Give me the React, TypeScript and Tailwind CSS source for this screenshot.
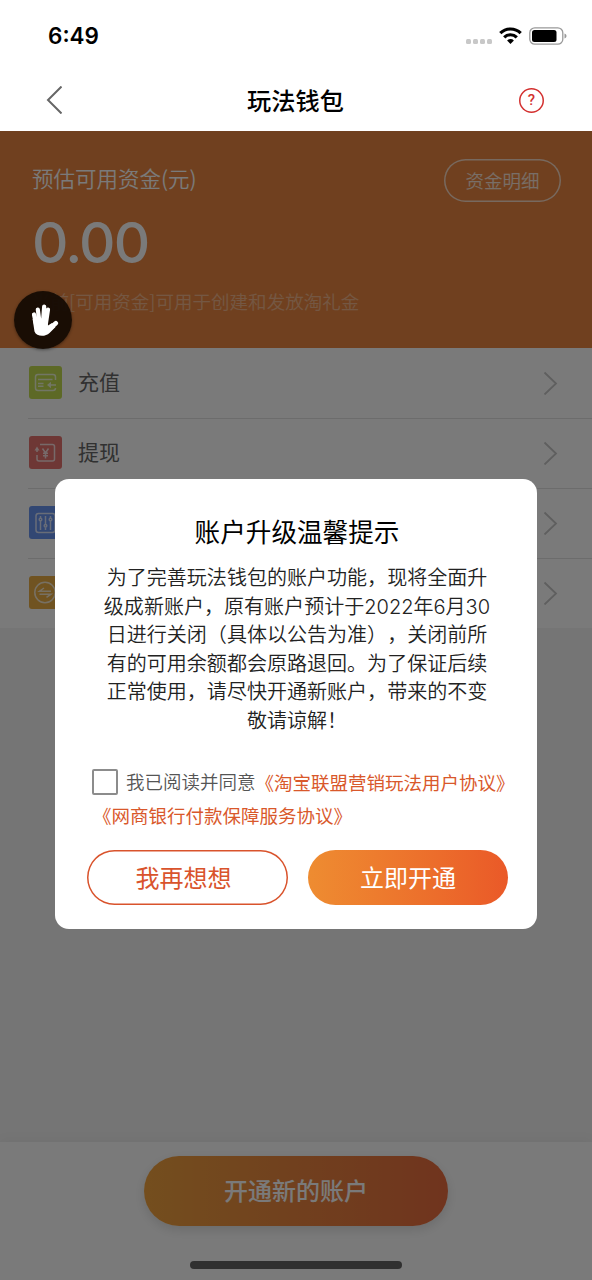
import { clsx } from 'clsx';
import type { ReactNode } from 'react';

type TMenuItem = {
  id: string;
  label?: string;
  color: string;
  icon: ReactNode;
};

const NOTICE_LINES = [
  '为了完善玩法钱包的账户功能，现将全面升',
  '级成新账户，原有账户预计于2022年6月30',
  '日进行关闭（具体以公告为准），关闭前所',
  '有的可用余额都会原路退回。为了保证后续',
  '正常使用，请尽快开通新账户，带来的不变',
  '敬请谅解！'
];

const MENU_ITEMS: TMenuItem[] = [
  {
    id: 'recharge',
    label: '充值',
    color: 'bg-[#c2dc50]',
    icon: (
      <>
        <path d="M26.500 14V11A2.500 2.500 0 0 0 24 8.500H9A2.500 2.500 0 0 0 6.500 11v11A2.500 2.500 0 0 0 9 24.500h15a2.500 2.500 0 0 0 2.500-2.500" />
        <path d="M9 13.500h14.500M9 17.500h5.500M9 20.200h5.500M27 19h-8" />
        <path d="M22 15.800L18 19l4 3.200z" fill="#fff" stroke="none" />
      </>
    )
  },
  {
    id: 'withdraw',
    label: '提现',
    color: 'bg-[#e57470]',
    icon: (
      <>
        <path d="M11 8.500h12.500a2 2 0 0 1 2 2v12.500a2 2 0 0 1-2 2H10a2 2 0 0 1-2-2v-4M8 16v-4" />
        <path d="M5.500 14.500L8 10.500l2.500 4z" fill="#fff" stroke="none" />
        <path d="M13.500 12.500l3 4.500 3-4.500M16.500 17v5.500M14 17.200h5M14 19.700h5" />
      </>
    )
  },
  {
    id: 'settings',
    color: 'bg-[#6a94f0]',
    icon: (
      <>
        <rect x="7" y="7.500" width="19" height="19" rx="2.500" />
        <path d="M11.500 10v2M11.500 15v9M16.500 10v8M16.500 21.500v2.500M21.500 10v2M21.500 15v9" />
        <circle cx="11.500" cy="13.500" r="1.300" />
        <circle cx="16.500" cy="19.700" r="1.300" />
        <circle cx="21.500" cy="13.500" r="1.300" />
      </>
    )
  },
  {
    id: 'transfer',
    color: 'bg-[#eaae45]',
    icon: (
      <>
        <circle cx="16" cy="16.500" r="10.200" />
        <path d="M22 15.200H10.500l4.500-3.200M10.500 18.200H22l-4.500 3.200" />
      </>
    )
  }
];

const StatusBar = () => (
  <div className="flex h-[70px] items-center justify-between pl-12 pr-[24px] pt-px">
    <span className="pt-[2px] font-['Inter'] text-[22.500px] font-semibold leading-none text-black">
      6:49
    </span>
    <div className="flex items-center">
      <div className="mr-[7px] mt-3 flex gap-[2px]">
        {[0, 1, 2, 3].map((dot) => (
          <span key={dot} className="size-[5px] rounded-[1.500px] bg-[#c8c8c8]" />
        ))}
      </div>
      <svg className="mr-[7px] h-[17px] w-[23px]" viewBox="0 0 23 17">
        <g fill="none" stroke="#000" strokeWidth="3.200">
          <path d="M1.300 6.200a14.500 14.500 0 0 1 20.400 0" />
          <path d="M5.200 10.300a9 9 0 0 1 12.600 0" />
        </g>
        <path d="M11.500 17l-3.400-3.500a4.800 4.800 0 0 1 6.800 0z" />
      </svg>
      <svg className="h-[18px] w-[39px]" viewBox="0 0 39 18">
        <rect
          x="0.800"
          y="0.800"
          width="33"
          height="16.400"
          rx="5"
          fill="none"
          stroke="#999"
          strokeWidth="1.300"
        />
        <rect x="3" y="3" width="24.500" height="12" rx="2.500" />
        <path d="M35.500 6.500c2.700 1 2.700 4 0 5z" fill="#999" />
      </svg>
    </div>
  </div>
);

const NavBar = () => (
  <div className="flex h-[61px] items-center justify-between pb-px pl-[46px] pr-12">
    <svg
      className="h-7 w-4"
      viewBox="0 0 16 28"
      fill="none"
      stroke="#666"
      strokeWidth="2"
    >
      <path d="M15.500 0.500L2 14l13.500 13.500" />
    </svg>
    <h1 className="pl-[10px] text-[24.200px] font-medium leading-none text-black">
      玩法钱包
    </h1>
    <span className="flex size-[25px] items-center justify-center rounded-full font-['Roboto'] text-[15px] font-medium leading-none text-[#d3302f] shadow-[inset_0_0_0_1.5px_#d3302f]">
      ?
    </span>
  </div>
);

const Balance = () => (
  <section className="flex h-[217px] justify-between bg-[#eb8741] pl-8 pr-[31px] text-white">
    <div>
      <p className="mt-[34px] text-[21.500px] leading-[26px] font-[350]">
        预估可用资金(元)
      </p>
      <p className="mt-[22px] font-['Inter'] text-[56.500px] leading-[60px] font-[450] tracking-[-1.800px]">
        0.00
      </p>
      <p className="mt-[16px] text-[18.550px] leading-[24px] font-[350] opacity-40">
        当前[可用资金]可用于创建和发放淘礼金
      </p>
    </div>
    <button className="mt-7 h-[43px] w-[117px] rounded-full pb-px text-[18.500px] leading-none font-[350] text-white/80 shadow-[inset_0_0_0_1.5px_rgba(255,255,255,0.7)]">
      资金明细
    </button>
  </section>
);

const Menu = () => (
  <ul className="h-[280px] bg-white pl-7">
    {MENU_ITEMS.map((item, index) => (
      <li
        key={item.id}
        className={clsx(
          'flex h-[70px] items-center pr-[34px]',
          index < MENU_ITEMS.length - 1 && 'shadow-[0_1px_0_#e2e2e2]'
        )}
      >
        <span
          className={clsx('mb-px ml-px size-[33px] rounded-[3px]', item.color)}
        >
          <svg
            className="size-[33px]"
            viewBox="0 0 33 33"
            fill="none"
            stroke="#fff"
            strokeWidth="1.500"
            opacity="0.75"
          >
            {item.icon}
          </svg>
        </span>
        <span className="ml-4 flex-1 pb-[3px] text-[21px] leading-none text-[#666]">
          {item.label}
        </span>
        <svg
          className="h-6 w-[15px]"
          viewBox="0 0 15 24"
          fill="none"
          stroke="#c6c6c6"
          strokeWidth="1.800"
        >
          <path d="M1.500 1.500L13 12.500 1.500 23.500" />
        </svg>
      </li>
    ))}
  </ul>
);

const FloatingHand = () => (
  <div className="absolute left-[14px] top-[291px] flex size-[58px] items-center justify-center rounded-full bg-[#140b03]/95 shadow-[0_1px_3px_rgba(0,0,0,0.4)]">
    <svg className="h-[33px] w-[31px]" viewBox="0 0 31 33" fill="#fff">
      <g stroke="#fff" strokeLinecap="round" strokeWidth="4.200">
        <path d="M6 10.500L8 20M9.800 5.500L11.500 18M16.200 2.500L15 18M20 5.500L18 19" />
        <path d="M27.800 19.200L20 26" strokeWidth="4.600" />
      </g>
      <path d="M4.600 15L12 14.500l2.500 1.500 5.200-1 0.300 6.500 4-2.500 3.500 4-6 6c-4 4-13 4-15-1.500z" />
    </svg>
  </div>
);

const UpgradeDialog = () => (
  <div
    role="dialog"
    className="absolute left-[55px] top-[479px] h-[450px] w-[482px] rounded-[14px] bg-white"
  >
    <h2 className="mt-[37px] pl-[2px] text-center text-[25.600px] leading-[30px] text-black">
      账户升级温馨提示
    </h2>
    <div className="mt-[18px] pl-[2px] text-center font-['Inter','Noto_Sans_CJK_SC',sans-serif] text-[20.050px] leading-[28.600px] font-[350] whitespace-nowrap text-[#222] [text-spacing-trim:space-all]">
      {NOTICE_LINES.map((line) => (
        <p key={line}>{line}</p>
      ))}
    </div>
    <div className="mt-[30px] pl-[37px] text-[18.500px] leading-[33px] whitespace-nowrap [text-spacing-trim:space-all]">
      <div className="flex h-[33px] items-center">
        <span className="mr-[8px] size-[26px] rounded-[2px] border-2 border-[#8c8c8c] bg-white" />
        <span className="pb-[2px] font-[350] text-[#555]">我已阅读并同意</span>
        <a className="text-[#d9582b]">《淘宝联盟营销玩法用户协议》</a>
      </div>
      <a className="block pl-px text-[#d9582b]">《网商银行付款保障服务协议》</a>
    </div>
    <div className="mt-[18px] flex gap-5 pl-8 text-[24px] leading-none">
      <button className="h-[55px] w-[201px] rounded-full pr-2 pb-px text-[#d9532c] shadow-[inset_0_0_0_1.5px_#d9532c]">
        我再想想
      </button>
      <button className="h-[55px] w-[200px] rounded-full bg-linear-to-r from-[#ee8c31] to-[#ea5928] pb-px text-white">
        立即开通
      </button>
    </div>
  </div>
);

const App = () => (
  <div className="relative flex h-[1280px] w-[592px] flex-col overflow-hidden bg-[#f4f4f4] font-['Noto_Sans_CJK_SC',sans-serif]">
    <header className="bg-white">
      <StatusBar />
      <NavBar />
    </header>
    <Balance />
    <Menu />
    <div className="flex-1" />
    <footer className="flex h-[138px] justify-center bg-white pt-[14px] shadow-[0_-2px_12px_rgba(0,0,0,0.04)]">
      <button className="h-[70px] w-[304px] rounded-full bg-linear-to-r from-[#f2a43f] via-[#ec8640] to-[#ea6d3f] pb-[2px] text-[24px] font-medium leading-none text-white shadow-[0_4px_12px_rgba(0,0,0,0.12)]">
        开通新的账户
      </button>
    </footer>
    <div className="absolute inset-x-0 top-[131px] bottom-0 bg-black/52" />
    <FloatingHand />
    <UpgradeDialog />
    <div className="absolute bottom-[11px] left-[190px] h-[8px] w-[212px] rounded-full bg-[#303030]" />
  </div>
);

export default App;
